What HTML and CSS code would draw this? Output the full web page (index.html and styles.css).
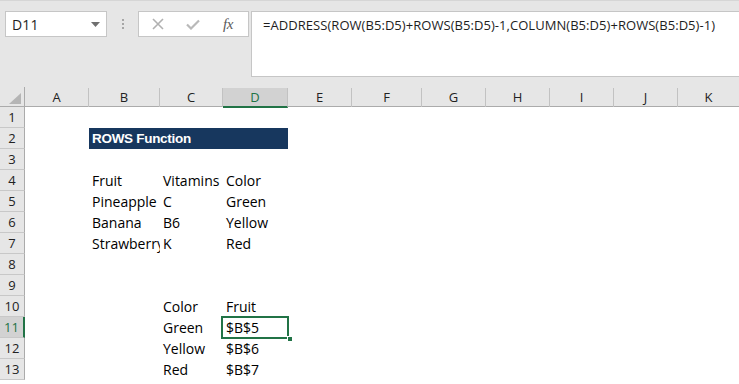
FILE: index.html
```html
<!DOCTYPE html>
<html lang="en">
<head>
<meta charset="utf-8">
<title>ROWS Function</title>
<link rel="stylesheet" href="styles.css">
</head>
<body>
<div class="app">
  <div class="toolbar">
    <div class="namebox">
      <span class="name">D11</span>
      <svg class="dd" width="9" height="5" viewBox="0 0 9 5"><path d="M0 0H9L4.5 5Z"/></svg>
    </div>
    <div class="grip"><i></i><i></i><i></i></div>
    <div class="fxbox">
      <svg class="ic ic-x" width="12" height="12" viewBox="0 0 12 12"><path d="M1 1L11 11M11 1L1 11"/></svg>
      <svg class="ic ic-check" width="14" height="11" viewBox="0 0 14 11"><path d="M1 5.5L5 9.5L13 1.5"/></svg>
      <span class="fx">fx</span>
    </div>
    <div class="formula">=ADDRESS(ROW(B5:D5)+ROWS(B5:D5)-1,COLUMN(B5:D5)+ROWS(B5:D5)-1)</div>
  </div>

  <div class="sheet">
    <div class="hrow">
      <div class="corner"><svg width="12" height="11" viewBox="0 0 12 11"><path d="M12 0V11H0Z"/></svg></div>
      <div class="ch">A</div>
      <div class="ch">B</div>
      <div class="ch">C</div>
      <div class="ch ch-sel">D</div>
      <div class="ch">E</div>
      <div class="ch">F</div>
      <div class="ch">G</div>
      <div class="ch">H</div>
      <div class="ch">I</div>
      <div class="ch">J</div>
      <div class="ch ch-last">K</div>
    </div>

    <div class="row"><div class="rh">1</div></div>
    <div class="row"><div class="rh">2</div><div class="title">ROWS Function</div></div>
    <div class="row"><div class="rh">3</div></div>
    <div class="row"><div class="rh">4</div><div class="cell c-b">Fruit</div><div class="cell c-c">Vitamins</div><div class="cell c-d">Color</div></div>
    <div class="row"><div class="rh">5</div><div class="cell c-b">Pineapple</div><div class="cell c-c">C</div><div class="cell c-d">Green</div></div>
    <div class="row"><div class="rh">6</div><div class="cell c-b">Banana</div><div class="cell c-c">B6</div><div class="cell c-d">Yellow</div></div>
    <div class="row"><div class="rh">7</div><div class="cell c-b clip">Strawberry</div><div class="cell c-c">K</div><div class="cell c-d">Red</div></div>
    <div class="row"><div class="rh">8</div></div>
    <div class="row"><div class="rh">9</div></div>
    <div class="row"><div class="rh">10</div><div class="cell c-c">Color</div><div class="cell c-d">Fruit</div></div>
    <div class="row"><div class="rh rh-sel">11</div><div class="cell c-c">Green</div><div class="cell c-d active">$B$5<span class="handle"></span></div></div>
    <div class="row"><div class="rh">12</div><div class="cell c-c">Yellow</div><div class="cell c-d">$B$6</div></div>
    <div class="row"><div class="rh">13</div><div class="cell c-c">Red</div><div class="cell c-d">$B$7</div></div>
  </div>
</div>
</body>
</html>
```

FILE: styles.css
```css
* { box-sizing: border-box; }

html, body {
  margin: 0;
  padding: 0;
  background: #ffffff;
}

.app {
  width: 739px;
  height: 384px;
  overflow: hidden;
  font-family: "Open Sans", "Noto Sans", sans-serif;
}

/* ---------- toolbar / formula bar ---------- */
.toolbar {
  height: 87px;
  background: #e6e6e6;
  border-top: 1px solid #d6d6d6;
  display: flex;
  align-items: flex-start;
  padding-top: 10px;
  padding-left: 5px;
}

.namebox {
  width: 102px;
  height: 26px;
  background: #fff;
  border: 1px solid #c6c6c6;
  display: flex;
  align-items: center;
  justify-content: space-between;
  padding: 0 6px 0 6px;
}

.name {
  font-size: 14px;
  color: #1e1e1e;
  letter-spacing: 0.2px;
}

.dd { fill: #6f6f6f; margin-top: 1px; }

.grip {
  width: 31px;
  height: 26px;
  display: flex;
  flex-direction: column;
  align-items: center;
  justify-content: center;
  gap: 2px;
}

.grip i {
  width: 2px;
  height: 2px;
  background: #a6a6a6;
}

.fxbox {
  width: 111px;
  height: 26px;
  background: #fff;
  border: 1px solid #c6c6c6;
  display: flex;
  align-items: center;
  padding-left: 13px;
}

.ic { fill: none; stroke-width: 1.6; }
.ic-x { stroke: #b1b1b1; }
.ic-check { stroke: #b9b9b9; stroke-width: 2.2; margin-left: 22px; }

.fx {
  margin-left: 23px;
  font-family: "Liberation Serif", serif;
  font-style: italic;
  font-size: 15px;
  color: #5a5a5a;
  letter-spacing: -0.5px;
}

.formula {
  margin-left: 2px;
  flex: 1;
  height: 66px;
  background: #fff;
  border: 1px solid #c6c6c6;
  border-right: none;
  padding: 4px 0 0 11px;
  font-size: 13px;
  letter-spacing: 0.05px;
  color: #1e1e1e;
  white-space: nowrap;
  overflow: hidden;
}

/* ---------- sheet ---------- */
.sheet {
  font-family: "Open Sans", "Noto Sans", sans-serif;
}

.hrow, .row {
  display: grid;
  grid-template-columns: 25px 64px 71px 63px 65px 64px 70px 64px 64px 64px 64px 1fr;
}

.hrow {
  height: 20px;
  background: #e6e6e6;
  border-bottom: 1px solid #ababab;
}

.corner {
  border-right: 1px solid #ababab;
  display: flex;
  align-items: flex-end;
  justify-content: flex-end;
  padding: 0 3px 3px 0;
}
.corner svg { fill: #b5b5b5; }

.ch {
  font-size: 13px;
  color: #222;
  text-align: center;
  line-height: 19px;
  border-right: 1px solid #c2c2c2;
  margin-top: 1px;
}
.ch-last { border-right: none; }

.ch-sel {
  background: #d2d2d2;
  border-bottom: 2px solid #217346;
  margin-bottom: -1px;
  color: #217346;
  line-height: 18px;
}

.row {
  height: 21px;
}

.rh {
  grid-column: 1;
  background: #e6e6e6;
  border-right: 1px solid #ababab;
  border-bottom: 1px solid #c8c8c8;
  font-size: 13px;
  color: #222;
  text-align: center;
  line-height: 20px;
}

.rh-sel {
  background: #d2d2d2;
  border-right: 2px solid #217346;
  color: #217346;
}

.cell {
  font-size: 14px;
  color: #000;
  padding-left: 3px;
  line-height: 21px;
  white-space: nowrap;
  position: relative;
}

.c-b { grid-column: 3; }
.c-c { grid-column: 4; }
.c-d { grid-column: 5; }

.clip { overflow: hidden; }

.title {
  grid-column: 3 / 6;
  background: #17375e;
  color: #fff;
  font-family: "Liberation Sans", Arial, sans-serif;
  font-weight: bold;
  font-size: 13.5px;
  letter-spacing: -0.3px;
  line-height: 21px;
  padding-left: 3px;
}

.active {
  outline: 2px solid #217346;
  outline-offset: -1px;
  margin-left: -1px;
  padding-left: 4px;
}

.handle {
  position: absolute;
  right: -4px;
  bottom: -3px;
  width: 5px;
  height: 5px;
  background: #217346;
  border: 1px solid #fff;
  border-width: 1px 0 0 1px;
}
```
